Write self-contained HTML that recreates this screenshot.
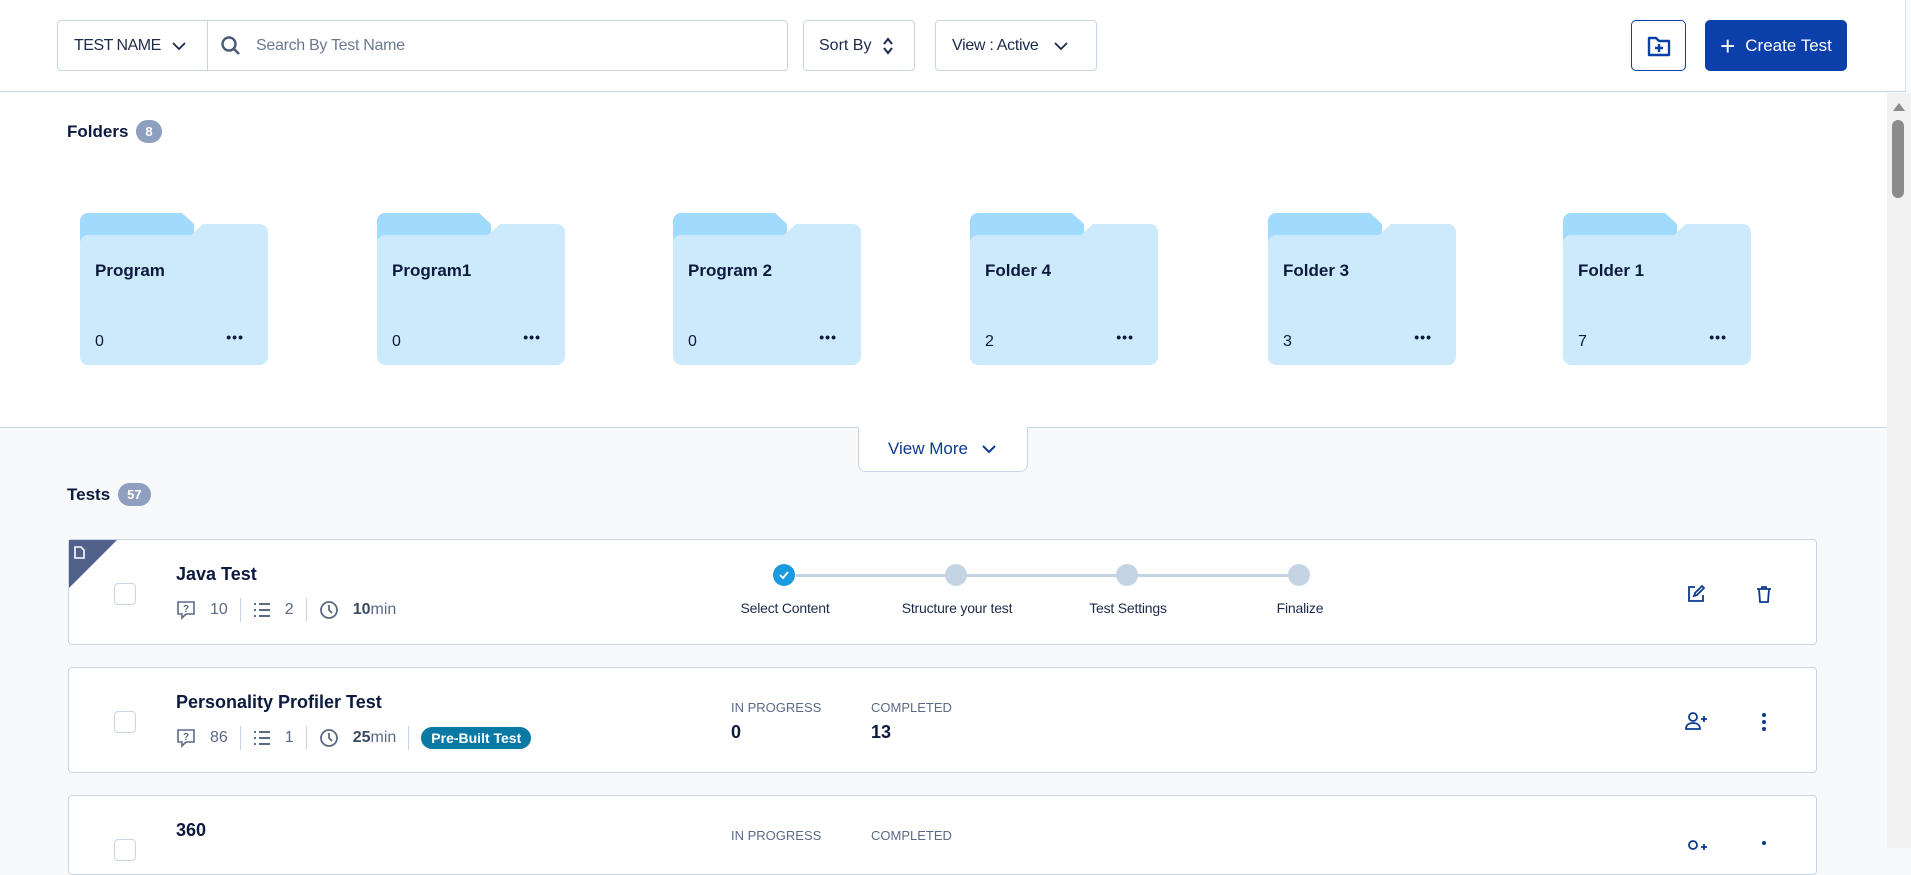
<!DOCTYPE html>
<html><head><meta charset="utf-8"><style>
*{box-sizing:border-box;margin:0;padding:0}
body{width:1911px;height:848px;overflow:hidden;font-family:"Liberation Sans",sans-serif;background:#f7f9fb;position:relative;color:#0c1a3d}
.abs{position:absolute}
.top{left:0;top:0;width:1906px;height:92px;background:#fff;border-bottom:1px solid #c5d7e6;border-right:1px solid #dde4ea}
.box{border:1px solid #c5d7e6;border-radius:4px;background:#fff;display:flex;align-items:center;font-size:16px;color:#1b2a4a}
.folders{left:0;top:93px;width:1906px;height:335px;background:#fff;border-bottom:1px solid #c5d7e6}
.h{font-size:17px;font-weight:bold;color:#0c1a3d;display:flex;align-items:center}
.badge{background:#8f9fbf;color:#fff;font-size:13px;border-radius:12px;padding:4px 9px;margin-left:8px;font-weight:bold}
.folder{width:188px;height:152px}
.folder .ttl{position:absolute;left:15px;top:48px;font-size:17px;font-weight:bold;color:#0c1a3d}
.folder .cnt{position:absolute;left:15px;bottom:14px;font-size:16px;color:#0c1a3d}
.folder .dots{position:absolute;right:24px;bottom:20px;font-size:14px;font-weight:bold;letter-spacing:1px;color:#0c1a3d}
.card{left:68px;width:1749px;background:#fff;border:1px solid #c5d7e6;border-radius:4px}
.chk{position:absolute;left:45px;width:22px;height:22px;border:1px solid #c5d7e6;border-radius:4px}
.title{position:absolute;left:107px;font-size:18px;font-weight:bold;color:#0c1a3d}
.meta{position:absolute;left:107px;display:flex;align-items:center;font-size:16px;color:#5a6a85}
.sep{width:1px;height:24px;background:#c5d7e6;margin:0 12px}
.lbl{position:absolute;font-size:13px;color:#5a6a85}
.val{position:absolute;font-size:18px;font-weight:bold;color:#0c1a3d}
.step{position:absolute;width:22px;height:22px;border-radius:50%;background:#c5d4e3;top:24px}
.sl{position:absolute;top:60px;font-size:14px;color:#1b2a4a;transform:translateX(-50%);white-space:nowrap;letter-spacing:-0.2px}
</style></head><body>
<div class="abs top">
 <div class="abs box" style="left:57px;top:20px;width:731px;height:51px">
  <div style="width:150px;height:100%;border-right:1px solid #c5d7e6;display:flex;align-items:center;padding-left:16px;letter-spacing:-0.5px">TEST NAME <svg width="16" height="16" style="margin-left:10px" viewBox="0 0 16 16"><path d="M2 5l6 6 6-6" fill="none" stroke="#1b2a4a" stroke-width="1.8"/></svg></div>
  <svg width="22" height="22" style="margin-left:12px" viewBox="0 0 22 22"><circle cx="9" cy="9" r="6.5" fill="none" stroke="#4a5a75" stroke-width="2.4"/><path d="M14 14l5 5" stroke="#4a5a75" stroke-width="2.6"/></svg>
  <span style="margin-left:14px;color:#6b7a90;letter-spacing:-0.3px">Search By Test Name</span>
 </div>
 <div class="abs box" style="left:803px;top:20px;width:112px;height:51px;padding-left:15px">Sort By <svg width="14" height="20" style="margin-left:10px" viewBox="0 0 14 20"><path d="M3 8l4-5 4 5M3 12l4 5 4-5" fill="none" stroke="#1b2a4a" stroke-width="2"/></svg></div>
 <div class="abs box" style="left:935px;top:20px;width:162px;height:51px;padding-left:16px;letter-spacing:-0.3px">View : Active <svg width="16" height="16" style="margin-left:14px" viewBox="0 0 16 16"><path d="M2 5l6 6 6-6" fill="none" stroke="#1b2a4a" stroke-width="1.8"/></svg></div>
 <div class="abs" style="left:1631px;top:20px;width:55px;height:51px;border:1.5px solid #0b40a8;border-radius:5px;display:flex;align-items:center;justify-content:center"><svg width="26" height="24" viewBox="0 0 26 24"><path d="M3 4h7l3 3h10v14H3z" fill="none" stroke="#0b40a8" stroke-width="2.4" stroke-linejoin="round"/><path d="M13 10v8M9 14h8" stroke="#0b40a8" stroke-width="2.4"/></svg></div>
 <div class="abs" style="left:1705px;top:20px;width:142px;height:51px;background:#0b40ab;border-radius:5px;color:#fff;font-size:17px;display:flex;align-items:center;justify-content:center"><span style="font-size:26px;font-weight:300;margin-right:10px;line-height:1">+</span>Create Test</div>
</div>
<div class="abs folders"></div>
<div class="abs" style="left:1887px;top:93px;width:24px;height:755px;background:#f1f1f1"></div>
<div class="abs" style="left:1892px;top:120px;width:12px;height:78px;background:#8b8b8b;border-radius:6px"></div>
<div class="abs" style="left:1893px;top:103px;width:0;height:0;border-left:6px solid transparent;border-right:6px solid transparent;border-bottom:8px solid #8b8b8b"></div>
<div class="abs h" style="left:67px;top:120px">Folders<span class="badge">8</span></div>

<!-- folders -->
<div class="abs folder" style="left:80px;top:213px">
 <svg class="abs" style="left:0;top:0" width="188" height="152" viewBox="0 0 188 152"><path d="M0 8a8 8 0 0 1 8-8h94l12 11v20H0z" fill="#a0dafd"/><path d="M17 22h100v15H17z" fill="#fff"/><path d="M0 30a8 8 0 0 1 8-8h103l12-11h57a8 8 0 0 1 8 8v125a8 8 0 0 1-8 8H8a8 8 0 0 1-8-8z" fill="#cdeafc"/></svg>
 <div class="ttl">Program</div><div class="cnt">0</div><div class="dots">•••</div></div>
<div class="abs folder" style="left:377px;top:213px">
 <svg class="abs" style="left:0;top:0" width="188" height="152" viewBox="0 0 188 152"><path d="M0 8a8 8 0 0 1 8-8h94l12 11v20H0z" fill="#a0dafd"/><path d="M17 22h100v15H17z" fill="#fff"/><path d="M0 30a8 8 0 0 1 8-8h103l12-11h57a8 8 0 0 1 8 8v125a8 8 0 0 1-8 8H8a8 8 0 0 1-8-8z" fill="#cdeafc"/></svg>
 <div class="ttl">Program1</div><div class="cnt">0</div><div class="dots">•••</div></div>
<div class="abs folder" style="left:673px;top:213px">
 <svg class="abs" style="left:0;top:0" width="188" height="152" viewBox="0 0 188 152"><path d="M0 8a8 8 0 0 1 8-8h94l12 11v20H0z" fill="#a0dafd"/><path d="M17 22h100v15H17z" fill="#fff"/><path d="M0 30a8 8 0 0 1 8-8h103l12-11h57a8 8 0 0 1 8 8v125a8 8 0 0 1-8 8H8a8 8 0 0 1-8-8z" fill="#cdeafc"/></svg>
 <div class="ttl">Program 2</div><div class="cnt">0</div><div class="dots">•••</div></div>
<div class="abs folder" style="left:970px;top:213px">
 <svg class="abs" style="left:0;top:0" width="188" height="152" viewBox="0 0 188 152"><path d="M0 8a8 8 0 0 1 8-8h94l12 11v20H0z" fill="#a0dafd"/><path d="M17 22h100v15H17z" fill="#fff"/><path d="M0 30a8 8 0 0 1 8-8h103l12-11h57a8 8 0 0 1 8 8v125a8 8 0 0 1-8 8H8a8 8 0 0 1-8-8z" fill="#cdeafc"/></svg>
 <div class="ttl">Folder 4</div><div class="cnt">2</div><div class="dots">•••</div></div>
<div class="abs folder" style="left:1268px;top:213px">
 <svg class="abs" style="left:0;top:0" width="188" height="152" viewBox="0 0 188 152"><path d="M0 8a8 8 0 0 1 8-8h94l12 11v20H0z" fill="#a0dafd"/><path d="M17 22h100v15H17z" fill="#fff"/><path d="M0 30a8 8 0 0 1 8-8h103l12-11h57a8 8 0 0 1 8 8v125a8 8 0 0 1-8 8H8a8 8 0 0 1-8-8z" fill="#cdeafc"/></svg>
 <div class="ttl">Folder 3</div><div class="cnt">3</div><div class="dots">•••</div></div>
<div class="abs folder" style="left:1563px;top:213px">
 <svg class="abs" style="left:0;top:0" width="188" height="152" viewBox="0 0 188 152"><path d="M0 8a8 8 0 0 1 8-8h94l12 11v20H0z" fill="#a0dafd"/><path d="M17 22h100v15H17z" fill="#fff"/><path d="M0 30a8 8 0 0 1 8-8h103l12-11h57a8 8 0 0 1 8 8v125a8 8 0 0 1-8 8H8a8 8 0 0 1-8-8z" fill="#cdeafc"/></svg>
 <div class="ttl">Folder 1</div><div class="cnt">7</div><div class="dots">•••</div></div>

<div class="abs" style="left:858px;top:427px;width:170px;height:45px;background:#fff;border:1px solid #c5d7e6;border-top:none;border-radius:0 0 8px 8px;display:flex;align-items:center;justify-content:center;font-size:17px;color:#0b3a8f">View More <svg width="18" height="16" style="margin-left:12px" viewBox="0 0 18 16"><path d="M3 5l6 6 6-6" fill="none" stroke="#0b3a8f" stroke-width="2"/></svg></div>
<div class="abs h" style="left:67px;top:483px">Tests<span class="badge">57</span></div>

<!-- card 1 -->
<div class="abs card" style="top:539px;height:106px">
 <svg class="abs" style="left:0;top:0" width="48" height="48"><path d="M0 0h48L0 48z" fill="#52618a"/><path d="M6 7h6l3 3v8H6z" fill="none" stroke="#fff" stroke-width="1.6"/></svg>
 <div class="chk" style="top:43px"></div>
 <div class="title" style="top:24px">Java Test</div>
 <div class="meta" style="top:58px">
  <svg width="20" height="20" viewBox="0 0 20 20"><path d="M2 2h16v12h-8l-4 4v-4H2z" fill="none" stroke="#5a6a85" stroke-width="1.6"/><text x="10" y="12" font-size="10" text-anchor="middle" fill="#5a6a85" font-weight="bold">?</text></svg><span style="margin-left:14px">10</span><div class="sep"></div>
  <svg width="18" height="16" viewBox="0 0 18 16"><path d="M1 2h2M1 8h2M1 14h2M6 2h11M6 8h11M6 14h11" stroke="#5a6a85" stroke-width="2"/></svg><span style="margin-left:14px">2</span><div class="sep"></div>
  <svg width="20" height="20" viewBox="0 0 20 20"><circle cx="10" cy="10" r="8" fill="none" stroke="#5a6a85" stroke-width="1.8"/><path d="M10 5v5l3 3" fill="none" stroke="#5a6a85" stroke-width="1.8"/></svg><span style="margin-left:14px"><b style="color:#3a4a65">10</b>min</span>
 </div>
 <div class="abs" style="left:727px;top:34px;width:503px;height:3px;background:#c5d4e3"></div>
 <div class="step" style="left:704px;background:#1a9be0"><svg width="22" height="22"><path d="M7 11l3 3 5-6" fill="none" stroke="#fff" stroke-width="1.8"/></svg></div>
 <div class="step" style="left:876px"></div>
 <div class="step" style="left:1047px"></div>
 <div class="step" style="left:1219px"></div>
 <div class="sl" style="left:716px">Select Content</div>
 <div class="sl" style="left:888px">Structure your test</div>
 <div class="sl" style="left:1059px">Test Settings</div>
 <div class="sl" style="left:1231px">Finalize</div>
 <svg class="abs" style="left:1617px;top:44px" width="20" height="20" viewBox="0 0 20 20"><path d="M9 3H3v14h14v-6" fill="none" stroke="#0b3a8f" stroke-width="1.8"/><path d="M8 12l1-3 7-7 2 2-7 7z" fill="none" stroke="#0b3a8f" stroke-width="1.8"/></svg>
 <svg class="abs" style="left:1685px;top:44px" width="20" height="20" viewBox="0 0 20 20"><path d="M3 5h14M8 5V3h4v2M5 5l1 13h8l1-13" fill="none" stroke="#0b3a8f" stroke-width="1.8"/></svg>
</div>

<!-- card 2 -->
<div class="abs card" style="top:667px;height:106px">
 <div class="chk" style="top:43px"></div>
 <div class="title" style="top:24px">Personality Profiler Test</div>
 <div class="meta" style="top:58px">
  <svg width="20" height="20" viewBox="0 0 20 20"><path d="M2 2h16v12h-8l-4 4v-4H2z" fill="none" stroke="#5a6a85" stroke-width="1.6"/><text x="10" y="12" font-size="10" text-anchor="middle" fill="#5a6a85" font-weight="bold">?</text></svg><span style="margin-left:14px">86</span><div class="sep"></div>
  <svg width="18" height="16" viewBox="0 0 18 16"><path d="M1 2h2M1 8h2M1 14h2M6 2h11M6 8h11M6 14h11" stroke="#5a6a85" stroke-width="2"/></svg><span style="margin-left:14px">1</span><div class="sep"></div>
  <svg width="20" height="20" viewBox="0 0 20 20"><circle cx="10" cy="10" r="8" fill="none" stroke="#5a6a85" stroke-width="1.8"/><path d="M10 5v5l3 3" fill="none" stroke="#5a6a85" stroke-width="1.8"/></svg><span style="margin-left:14px"><b style="color:#3a4a65">25</b>min</span><div class="sep"></div>
  <span style="background:#0a7aa5;color:#fff;font-size:14px;font-weight:bold;border-radius:12px;padding:3px 10px">Pre-Built Test</span>
 </div>
 <div class="lbl" style="left:662px;top:32px">IN PROGRESS</div><div class="val" style="left:662px;top:54px">0</div>
 <div class="lbl" style="left:802px;top:32px">COMPLETED</div><div class="val" style="left:802px;top:54px">13</div>
 <svg class="abs" style="left:1615px;top:43px" width="24" height="20" viewBox="0 0 24 20"><circle cx="9" cy="6" r="4" fill="none" stroke="#0b3a8f" stroke-width="1.8"/><path d="M2 18c0-4 3-6 7-6s7 2 7 6z" fill="none" stroke="#0b3a8f" stroke-width="1.8"/><path d="M20 5v6M17 8h6" stroke="#0b3a8f" stroke-width="1.8"/></svg>
 <svg class="abs" style="left:1692px;top:44px" width="6" height="20"><circle cx="3" cy="3" r="2" fill="#0b3a8f"/><circle cx="3" cy="10" r="2" fill="#0b3a8f"/><circle cx="3" cy="17" r="2" fill="#0b3a8f"/></svg>
</div>

<!-- card 3 -->
<div class="abs card" style="top:795px;height:80px">
 <div class="chk" style="top:43px"></div>
 <div class="title" style="top:24px">360</div>
 <div class="lbl" style="left:662px;top:32px">IN PROGRESS</div>
 <div class="lbl" style="left:802px;top:32px">COMPLETED</div>
 <svg class="abs" style="left:1615px;top:43px" width="24" height="20" viewBox="0 0 24 20"><circle cx="9" cy="6" r="4" fill="none" stroke="#0b3a8f" stroke-width="1.8"/><path d="M20 5v6M17 8h6" stroke="#0b3a8f" stroke-width="1.8"/></svg>
 <svg class="abs" style="left:1692px;top:44px" width="6" height="20"><circle cx="3" cy="3" r="2" fill="#0b3a8f"/></svg>
</div>
</body></html>
